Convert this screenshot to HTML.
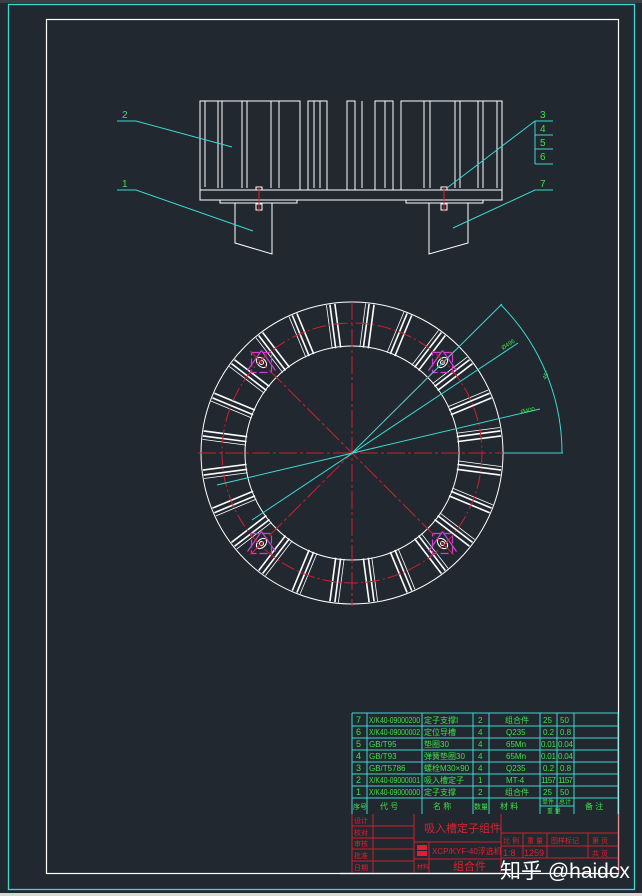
<!DOCTYPE html>
<html><head><meta charset="utf-8"><style>
html,body{margin:0;padding:0;background:#212830;}
svg{display:block}
text{font-family:"Liberation Sans","Noto Sans CJK SC",sans-serif;}
</style></head><body>
<svg id="s" width="642" height="896" viewBox="0 0 642 896" xmlns="http://www.w3.org/2000/svg">
<rect width="642" height="896" fill="#212830"/>
<rect x="0" y="0" width="642" height="3" fill="#3a3f45"/>
<rect x="0" y="893" width="642" height="3" fill="#d8d8d8"/>
<rect x="8.5" y="4.5" width="626" height="885" fill="none" stroke="#3fd6cf" stroke-width="1.3"/>
<rect x="46.5" y="19.5" width="572" height="854" fill="none" stroke="#fff" stroke-width="1.2"/>

<g stroke="#fff" stroke-width="1" fill="none">
<polyline points="200,190 200,101 300,101 300,190"/>
<polyline points="308,190 308,101 327,101 327,190"/>
<polyline points="347,190 347,101 355,101 355,190"/>
<polyline points="375,190 375,101 393,101 393,190"/>
<polyline points="401,190 401,101 502,101 502,190"/>
<rect x="200" y="190" width="302" height="10"/>
<rect x="220" y="200" width="77" height="3"/>
<rect x="406" y="200" width="77" height="3"/>
<polyline points="235,203 235,243 272,254 272,203"/>
<polyline points="429,203 429,254 468,243 468,203"/>
<path d="M205 101V187M218 101V188M222 101V188M242 101V188M247 101V188M271 101V188M279 101V188M314 101V188M320 101V188M362 101V188M385 101V188M424 101V188M430 101V188M455 101V188M460 101V188M478 101V188M483 101V188M497 101V188"/>
<rect x="256" y="187" width="6" height="3"/><rect x="441" y="187" width="6" height="3"/>
<rect x="256" y="204" width="6" height="6"/><rect x="441" y="204" width="6" height="6"/>
</g>
<path d="M259 187V212M444 187V212" stroke="#e02030" stroke-width="1"/>
<g stroke="#3fd6cf" stroke-width="1" fill="none">
<polyline points="117,121 136,121 232,147"/>
<polyline points="117,190 136,190 253,231"/>
<path d="M535 121V164M535 121H553M535 135H553M535 149H553M535 164H553"/>
<polyline points="535,121 447,188"/>
<polyline points="553,190 535,190 453,228"/>
</g>
<g fill="#3fe04a" font-size="10">
<text x="122" y="118">2</text><text x="122" y="187">1</text>
<text x="540" y="118">3</text><text x="540" y="132">4</text><text x="540" y="146">5</text><text x="540" y="160">6</text><text x="540" y="187">7</text>
</g>

<g id="ring">
<circle cx="352" cy="453" r="151" fill="none" stroke="#fff" stroke-width="1"/>
<circle cx="352" cy="453" r="107" fill="none" stroke="#fff" stroke-width="1"/>
<circle cx="352" cy="453" r="130" fill="none" stroke="#d02030" stroke-width="1" stroke-dasharray="14 3 2 3"/>
<g stroke="#d02030" stroke-width="1" stroke-dasharray="18 3 3 3">
<path d="M198 453H505M352 302V606M250 351L454 555M454 351L250 555"/>
</g>
<g stroke="#3fd6cf" stroke-width="1" fill="none">
<path d="M352 453L502 304M217 485L540 409M252 520L518 343M503 453H563"/>
<path d="M562 453A210 210 0 0 0 500.5 304.5"/>
</g>
<g fill="#3fe04a" font-size="6">
<text transform="translate(503,350) rotate(-33)">Ø496</text>
<text transform="translate(521,414) rotate(-13)">Ø400</text>
<text transform="translate(546,380) rotate(-67)">45°</text>
</g>
</g>

<g stroke="#3fd6cf" stroke-width="1" fill="none">
<path d="M352 713H618M352 726H618M352 738H618M352 750H618M352 762H618M352 774H618M352 786H618M352 798H618M540 806H574"/>
<path d="M352 713V814M367 713V814M422 713V814M473 713V814M489 713V814M540 713V814M557 713V814M574 713V814M618 713V814"/>
</g>
<g fill="#3fe04a" font-size="9">
<g font-size="9">
<text x="356" y="723">7</text><text x="356" y="735">6</text><text x="356" y="747">5</text><text x="356" y="759">4</text><text x="356" y="771">3</text><text x="356" y="783">2</text><text x="356" y="795">1</text>
</g>
<g font-size="8">
<text x="369" y="723" textLength="51" lengthAdjust="spacingAndGlyphs">X/K40-09000200</text><text x="369" y="735" textLength="51" lengthAdjust="spacingAndGlyphs">X/K40-09000002</text><text x="369" y="747">GB/T95</text><text x="369" y="759">GB/T93</text><text x="369" y="771">GB/T5786</text><text x="369" y="783" textLength="51" lengthAdjust="spacingAndGlyphs">X/K40-09000001</text><text x="369" y="795" textLength="51" lengthAdjust="spacingAndGlyphs">X/K40-09000000</text>
<text x="424" y="723">定子支撑I</text><text x="424" y="735">定位导槽</text><text x="424" y="747">垫圈30</text><text x="424" y="759">弹簧垫圈30</text><text x="424" y="771">螺栓M30×90</text><text x="424" y="783">吸入槽定子</text><text x="424" y="795">定子支撑</text>
<text x="478" y="723">2</text><text x="478" y="735">4</text><text x="478" y="747">4</text><text x="478" y="759">4</text><text x="478" y="771">4</text><text x="478" y="783">1</text><text x="478" y="795">2</text>
<text x="505" y="723">组合件</text><text x="506" y="735">Q235</text><text x="506" y="747">65Mn</text><text x="506" y="759">65Mn</text><text x="506" y="771">Q235</text><text x="506" y="783">MT-4</text><text x="505" y="795">组合件</text>
<text x="543" y="723">25</text><text x="560" y="723">50</text><text x="543" y="735">0.2</text><text x="560" y="735">0.8</text><text x="541" y="747" textLength="15">0.01</text><text x="558" y="747" textLength="15">0.04</text><text x="541" y="759" textLength="15">0.01</text><text x="558" y="759" textLength="15">0.04</text><text x="543" y="771">0.2</text><text x="560" y="771">0.8</text><text x="541" y="783" textLength="15">1157</text><text x="558" y="783" textLength="15">1157</text><text x="543" y="795">25</text><text x="560" y="795">50</text>
<text x="353" y="809" font-size="7">序号</text><text x="380" y="809">代  号</text><text x="433" y="809">名  称</text><text x="474" y="809" font-size="7">数量</text><text x="500" y="809">材  料</text><text x="542" y="804" font-size="6">单件</text><text x="559" y="804" font-size="6">总计</text><text x="547" y="813" font-size="6">重 量</text><text x="585" y="809">备 注</text>
</g>
</g>
<g stroke="#d02030" stroke-width="1" fill="none">
<path d="M352 814V873M373 814V873M414 814V873M501 814V873M618 814V873M352 826H414M352 838H414M352 849H414M352 861H414M414 842H501M414 859H501M501 833H618M501 846H618M501 858H618M523 833V858M547 833V858M588 833V858M429 842V873"/>
</g>
<rect x="417" y="845" width="10" height="11" fill="#e02030"/>
<path d="M417 850.5H427" stroke="#212830" stroke-width="1"/>
<g fill="#e02030" font-size="7">
<text x="354" y="823">设计</text><text x="354" y="835">校对</text><text x="354" y="846">审核</text><text x="354" y="858">批准</text><text x="354" y="870">日期</text>
<text x="424" y="832" font-size="11">吸入槽定子组件</text>
<text x="432" y="854" font-size="8">XCP/KYF-40浮选机</text>
<text x="417" y="869" font-size="6">材料</text>
<text x="453" y="870" font-size="11">组合件</text>
<text x="503" y="843">比 例</text><text x="527" y="843">重 量</text><text x="551" y="843">图样标记</text><text x="592" y="843">第  页</text>
<text x="503" y="856" font-size="9">1:8</text><text x="524" y="856" font-size="9">1259</text><text x="592" y="856">共  页</text>
</g>
<path d="M340 873.5H501" stroke="#fff" stroke-width="1.2"/>
<text x="500" y="878" fill="#fff" font-size="21">知乎 @haidcx</text>
</svg>
<script>
(function(){
var s=document.getElementById('ring'),cx=352,cy=453,h='';
for(var k=0;k<24;k++){var a=(7.5+15*k)*Math.PI/180,c=Math.cos(a),si=Math.sin(a);
 [-2.5,2.5,6].forEach(function(o,i){var px=-si*o,py=-c*o;
 var x1=cx+c*106+px,y1=cy-si*106+py,x2=cx+c*150+px,y2=cy-si*150+py;
 h+='<line x1="'+x1+'" y1="'+y1+'" x2="'+x2+'" y2="'+y2+'" stroke="#fff" stroke-width="'+(i<2?1.6:0.8)+'"/>';});}
[45,135,225,315].forEach(function(d){var a=d*Math.PI/180,x=cx+Math.cos(a)*128,y=cy-Math.sin(a)*128;
 h+='<g stroke="#d040d0" stroke-width="1.2" fill="none"><rect x="'+(x-10)+'" y="'+(y-10)+'" width="20" height="20" stroke-dasharray="8 3"/><path d="M'+(x-14)+' '+(y+8)+'L'+x+' '+(y-12)+'M'+(x+14)+' '+(y+8)+'L'+x+' '+(y-12)+'"/></g>';
 h+='<ellipse cx="'+x+'" cy="'+y+'" rx="6" ry="4" fill="none" stroke="#fff" stroke-width="1" transform="rotate('+(-d)+' '+x+' '+y+')"/><circle cx="'+x+'" cy="'+y+'" r="2" fill="none" stroke="#fff"/>';});
s.insertAdjacentHTML('afterbegin',h);
})();
</script>
</body></html>
